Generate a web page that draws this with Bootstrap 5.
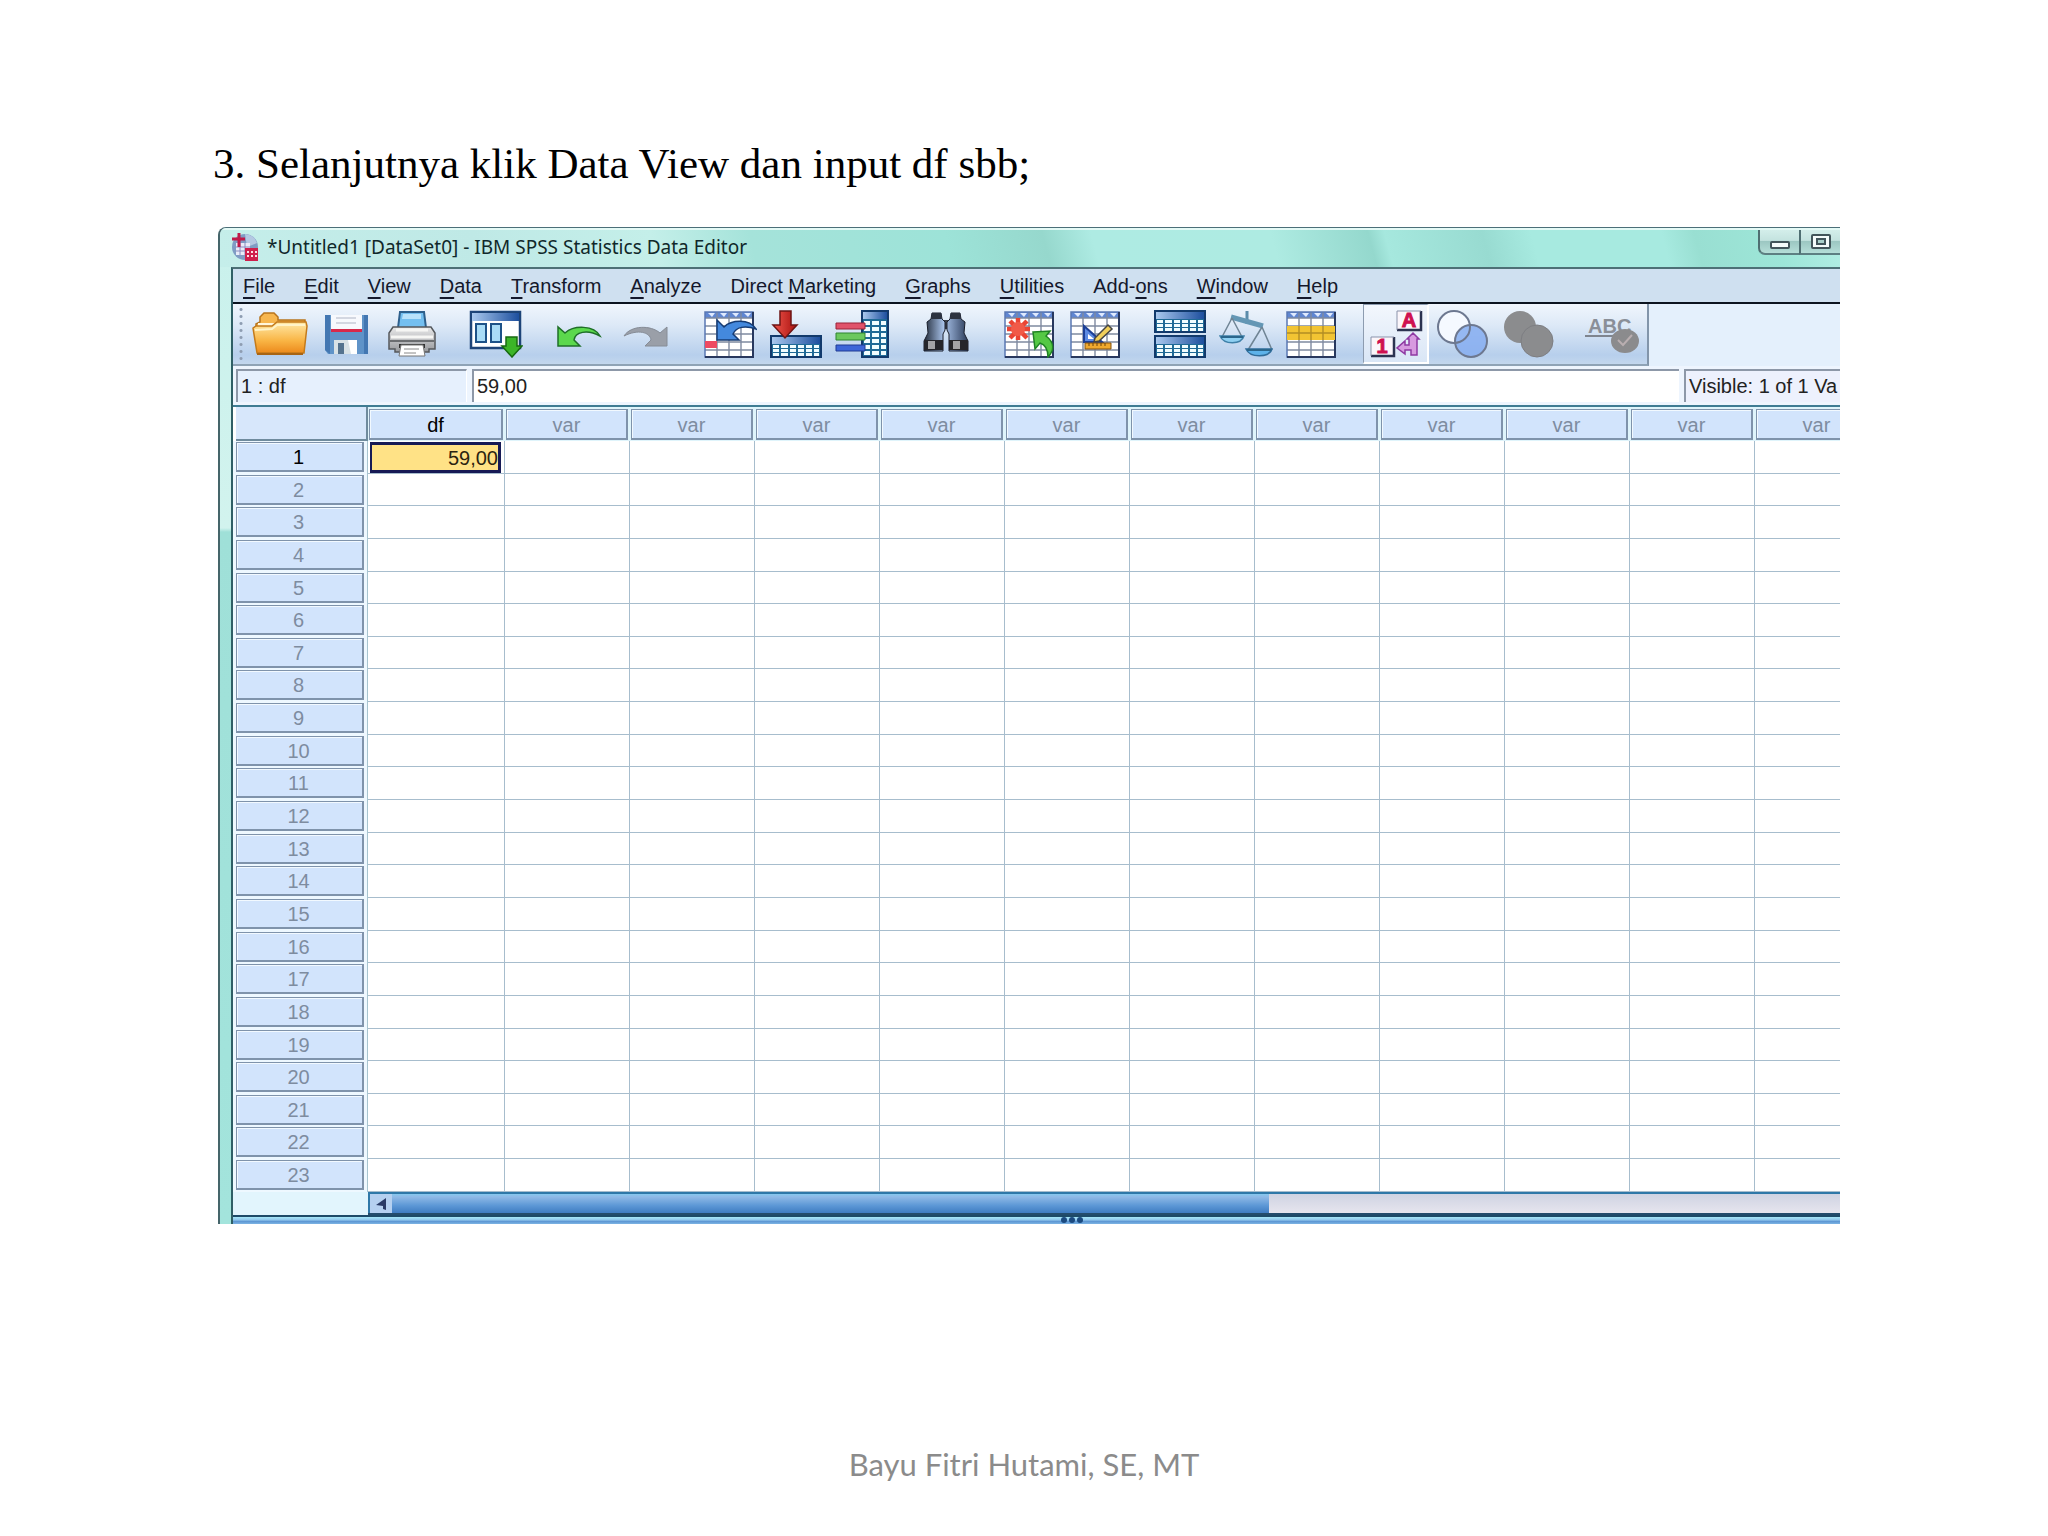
<!DOCTYPE html>
<html lang="id">
<head>
<meta charset="utf-8">
<meta name="viewport" content="width=device-width, initial-scale=1">
<title>Data View</title>
<link href="https://cdn.jsdelivr.net/npm/bootstrap@5.3.0/dist/css/bootstrap.min.css" rel="stylesheet">
<style>
body{background:#fff;color:#000;font-family:"Liberation Sans",Arial,sans-serif;font-size:20px;line-height:24px}
.slide{padding:140px 208px 48px 218px}
.step{font-family:"Liberation Serif","Times New Roman",serif;font-size:43px;line-height:48px;margin:0 0 39px -5px;font-weight:400}
.win{border-top:1px solid #4c6f78;border-left:2px solid #45656a;border-top-left-radius:8px;background:linear-gradient(#c9f1ec 0,#d2f3ee 300px,#9fe0d8 304px,#a3e4dc 100%);padding-left:11px;overflow:hidden}
.titlebar{height:39px;margin-left:-11px;padding-left:11px;border-top:2px solid #e4faf6;background:linear-gradient(75deg,#c5eeea 0,#bfe9e6 16%,#c4efe9 27%,#a5e3da 33%,#9de3d8 45%,#96d8cd 51%,#aeebe3 54%,#aeebe2 65%,#94d8cd 71%,#a6e8de 72%,#98dbd1 78%,#a7eae0 81%,#a7eae0 89%,#99dfd2 91%,#9de6d8 96%,#b2eee4 100%);font-family:"Noto Sans",sans-serif;font-size:18px}
.caption-line{height:34px}
.ttl{font-size:19px;line-height:24px;margin:0 0 0 8px;font-weight:400;color:#10282a}
.winbtn{height:25px;border:0;border-left:2px solid #4f6f72;border-bottom:2px solid #5d7f82;background:linear-gradient(#d3eeea 0,#c4e3df 45%,#9cc7c2 50%,#b5ded8 100%);padding:0;width:41px;line-height:0}
.winbtn:first-child{border-bottom-left-radius:7px}
.inner{border-top:2px solid #4d7076;border-left:2px solid #2f5f66;background:#e4f0fc}
.menus{height:35px;background:#cfe0f0;gap:29px;padding-left:10px;border-bottom:2px solid #0c1420}
.menus button{border:0;background:none;padding:0;color:#14182c;white-space:nowrap;line-height:24px}
.menus u{text-underline-offset:4px;text-decoration-thickness:2px}
.tools{width:1416px;height:62px;background:linear-gradient(#f0f6fd 0,#dde9f7 35%,#b7cfec 85%,#c3d7ee 100%);border-right:2px solid #8295aa;border-bottom:2px solid #8fa3b6}
.grip{width:14px;height:56px;padding-left:6px}
.grip::before{content:"";display:block;width:4px;height:56px;background:radial-gradient(circle,#8e9db2 1px,transparent 2px) 0 0/4px 7px}
.tool{width:66px;height:60px;flex:none;border:0;background:none;padding:0;line-height:0}
.tool.pressed{background:linear-gradient(#f3f7fd,#d9e6f6);border-top:1px solid #8d9cb0;border-left:1px solid #8d9cb0;border-right:2px solid #fff;border-bottom:2px solid #fff}
.gap-sep{margin-left:18px}
.entry{padding:3px 0 3px 3px;gap:5px;border-bottom:2px solid #3f7c93;background:#eef5fe}
.entry>*{height:33px;border:0;border-top:2px solid #8d98a8;border-left:2px solid #8d98a8;white-space:nowrap;border-radius:0;line-height:30px;padding:0 0 0 3px;color:#222}
.cellname{width:231px;flex:none;background:#e6f0fd;border-right:1px solid #fff!important}
.cellval{flex:1 1 0;min-width:0;background:#fff}
.visinfo{width:156px;flex:none;background:#edf1fd;overflow:hidden}
.sheet{overflow:hidden;background:#e2f5fd}
.gridtbl{table-layout:fixed;width:1647px;height:785px;border-collapse:separate;border-spacing:0;background:#fff;line-height:24px}
.gridtbl th,.gridtbl td{padding:0;font-weight:400;vertical-align:top}
.gridtbl td{border-right:1px solid #a7bdcd;border-bottom:1px solid #a7bdcd;text-align:right}
.gridtbl thead th{background:#dff4fb;height:34px}
.gridtbl tbody th{background:#eef8ff;border-right:1px solid #a7c4cf}
.box{display:block;text-align:center;border:1px solid #7f93ab;border-right-width:2px;border-bottom-width:2px;background:#d2e4fc;box-shadow:inset 1px 1px #f2f9ff;color:#7e8ca0}
thead .box{height:31px;margin:2px 2px 1px 1px;line-height:31px}
tbody .box{height:30px;margin:1px 3px 0;line-height:28px;padding-right:2px}
thead .corner{margin:0 0 0 3px;height:34px;border-width:0 2px 2px 0;border-color:#6f8b9d;box-shadow:none;background:#d7e7fb}
.box.on{color:#000}
.picked{display:block;margin:1px 3px -2px 2px;height:31px;border:3px solid #161a55;border-left-width:2px;background:#ffe286;line-height:26px;color:#2b2410}
.hscroll{height:23px;margin-left:135px;border-top:2px solid #2f78a8;border-bottom:2px solid #244c6c;background:linear-gradient(#cfd3e2,#e6e5ee)}
.arrowbtn{width:24px;border:0;border-left:2px solid #2f78a8;background:#b5d0f0;padding:0;line-height:0}
.thumb{width:877px;background:linear-gradient(#86c8ee 0,#8fb9e6 15%,#5d98d6 60%,#3f7cc2 100%)}
.split{height:9px;padding-left:70px;border-top:2px solid #1d4a68;background:linear-gradient(#a6e8f8 0,#8fc4ec 45%,#5b95d2 60%,#7db4e4 100%);line-height:0;text-align:center}
.author{font-family:Lato,"Open Sans",sans-serif;font-size:31px;line-height:36px;color:#8b8b8b;text-align:center;margin:222px 10px 0 0}
</style>
<script src="https://cdn.jsdelivr.net/npm/bootstrap@5.3.0/dist/js/bootstrap.bundle.min.js"></script>
</head>
<body>
<svg width="0" height="0" class="position-absolute" aria-hidden="true">
<defs>
<linearGradient id="gf" x2="0" y2="1"><stop offset="0" stop-color="#ffe9a8"/><stop offset=".6" stop-color="#f9b545"/><stop offset="1" stop-color="#ec8a1c"/></linearGradient>
<linearGradient id="gb"><stop offset="0" stop-color="#a9c8ee"/><stop offset="1" stop-color="#1d4f9e"/></linearGradient>
<linearGradient id="gc"><stop offset="0" stop-color="#222b3a"/><stop offset=".45" stop-color="#a9c3ea"/><stop offset="1" stop-color="#2a3a58"/></linearGradient>
<linearGradient id="gr"><stop offset="0" stop-color="#f0564c"/><stop offset="1" stop-color="#a8100e"/></linearGradient>
<linearGradient id="gp" x2="0" y2="1"><stop offset="0" stop-color="#e9e9ea"/><stop offset="1" stop-color="#96989c"/></linearGradient>
<g id="sheet">
<path d="M2 2h48v45H2z" fill="#fff"/><path d="M2 2h48v6H2z" fill="#5f86d2"/>
<path d="M5 3h7l-3 4zM17 3h7l-3 4zM29 3h7l-3 4zM41 3h7l-3 4z" fill="#dfeaff"/>
<path d="M2 8h48M2 16h48M2 24h48M2 32h48M2 40h48M14 2v45M26 2v45M38 2v45" stroke="#7f8aa0" stroke-width="1.4"/>
<path d="M2 2h48v45H2z" fill="none" stroke="#5a78b4" stroke-width="1.5"/><path d="M50 2v45H2" fill="none" stroke="#28385e" stroke-width="2"/>
</g>
<g id="half">
<path d="M1 1h50v21H1z" fill="#1f6a96"/><path d="M2 2h48v7H2z" fill="url(#gb)"/>
<path d="M3 10h6v3H3zm8 0h7v3h-7zm9 0h6v3h-6zm8 0h6v3h-6zm8 0h6v3h-6zm8 0h5v3h-5zM3 14h6v3H3zm8 0h7v3h-7zm9 0h6v3h-6zm8 0h6v3h-6zm8 0h6v3h-6zm8 0h5v3h-5zM3 18h6v3H3zm8 0h7v3h-7zm9 0h6v3h-6zm8 0h6v3h-6zm8 0h6v3h-6zm8 0h5v3h-5z" fill="#f1fdff"/>
<path d="M1 1h50v21H1z" fill="none" stroke="#123a6c" stroke-width="2"/>
</g>
</defs></svg>

<main class="slide">
<h1 class="step">3. Selanjutnya klik Data View dan input df sbb;</h1>

<section class="win" aria-label="Data Editor">
 <header class="titlebar d-flex align-items-start">
  <div class="caption-line d-flex align-items-center flex-grow-1">
   <svg width="28" height="28" viewBox="0 0 28 28" aria-hidden="true"><circle cx="14" cy="14" r="13" fill="#7f9cc4"/><path d="M14 1a13 13 0 0 1 12 9L16 14z" fill="#b4c8e2"/><path d="M5 10h14v12H5z" fill="#e8ecf8"/><path d="M5 14h14M5 18h14M9 10v12M14 10v12" stroke="#8c8cc0"/><path d="M8 0v14M1 6h13" stroke="#c01848" stroke-width="3"/><path d="M14 15h13v13H14z" fill="#cf1f4c"/><path d="M16 18h2v2h-2zm4 0h2v2h-2zm4 0h2v2h-2zm-8 4h2v2h-2zm4 0h2v2h-2zm4 0h2v2h-2z" fill="#fbdfe6"/></svg>
   <h2 class="ttl">*Untitled1 [DataSet0] - IBM SPSS Statistics Data Editor</h2>
  </div>
  <div class="d-flex">
   <button class="winbtn" aria-label="Minimize"><svg width="22" height="22" viewBox="0 0 22 22"><rect x="2" y="11" width="18" height="6" rx="1" fill="#f4fbfa" stroke="#42555a" stroke-width="2"/></svg></button>
   <button class="winbtn" aria-label="Maximize"><svg width="22" height="22" viewBox="0 0 22 22"><rect x="2" y="4" width="18" height="13" rx="1" fill="#f4fbfa" stroke="#42555a" stroke-width="2"/><rect x="7" y="8" width="8" height="5" fill="#a9cfca" stroke="#42555a" stroke-width="2"/></svg></button>
  </div>
 </header>

 <div class="inner">
  <nav class="menus d-flex align-items-center" aria-label="Menu">
   <button><u>F</u>ile</button><button><u>E</u>dit</button><button><u>V</u>iew</button><button><u>D</u>ata</button><button><u>T</u>ransform</button><button><u>A</u>nalyze</button><button>Direct <u>M</u>arketing</button><button><u>G</u>raphs</button><button><u>U</u>tilities</button><button>Add-<u>o</u>ns</button><button><u>W</u>indow</button><button><u>H</u>elp</button>
  </nav>

  <div class="tools d-flex align-items-center" role="toolbar" aria-label="Toolbar">
   <span class="grip"></span>
   <button class="tool" aria-label="Open"><svg width="56" height="48" viewBox="0 0 56 48"><path d="M4 14l4-2V7l4-4h10l4 4v3h27v12H4z" fill="#f7b64e" stroke="#b8741c" stroke-width="1.5"/><path d="M6 13h46v9H6z" fill="#fff6dc"/><path d="M1 18l3-2h16l5-4h29l1 4-3 27H5z" fill="url(#gf)" stroke="#c47a1a" stroke-width="1.5"/><path d="M5 44h46" stroke="#a86414" stroke-width="2"/><path d="M3 20l17-1 5-4h28" stroke="#fff3c8" fill="none" stroke-width="2"/></svg></button>
   <button class="tool" aria-label="Save"><svg width="52" height="48" viewBox="0 0 52 48"><path d="M5 5h43v39H8l-3-4z" fill="#5f93c8"/><path d="M5 5h5v39l-5-4zM44 5h4v39h-4z" fill="#4377b2"/><path d="M11 5h31v17H11z" fill="#f7f9fd"/><path d="M16 8h20M16 13h20" stroke="#c8cbd8" stroke-width="1.5"/><path d="M11 19h31v3H11z" fill="#d8294a"/><path d="M14 30h23v14H14z" fill="#d9e2e6"/><path d="M18 33h6v11h-6z" fill="#55738e"/><path d="M28 30h9v14h-6z" fill="#fff"/></svg></button>
   <button class="tool" aria-label="Print"><svg width="52" height="48" viewBox="0 0 52 48"><path d="M14 2h24l2 16H12z" fill="#74bff0" stroke="#2d5f8c" stroke-width="2"/><path d="M17 4h18v5H16z" fill="#b9e2fb"/><path d="M7 17h38l4 6v16h-6v3H9v-3H3V23z" fill="url(#gp)" stroke="#55585c" stroke-width="1.5"/><path d="M10 20h32M5 27h42" stroke="#f6f6f4" stroke-width="3"/><path d="M4 31h44" stroke="#6b6d70" stroke-width="2"/><path d="M13 34h26v4H13z" fill="#333"/><path d="M15 35h22l2 11H13z" fill="#fff" stroke="#777"/><path d="M18 39h15M18 43h12" stroke="#888"/></svg></button>
   <button class="tool gap-sep" aria-label="Recall dialogs"><svg width="54" height="48" viewBox="0 0 54 48"><path d="M2 2h49v36H2z" fill="#fff" stroke="#1d4478" stroke-width="2.5"/><path d="M3 3h47v8H3z" fill="url(#gb)"/><path d="M7 14h10v18H7zM22 14h10v18H22z" fill="#a9dcf7" stroke="#1d5288" stroke-width="2"/><path d="M37 27h11v9h5L43 47 33 36h4z" fill="#3cb528" stroke="#176a10" stroke-width="1.5"/></svg></button>
   <button class="tool gap-sep" aria-label="Undo"><svg width="52" height="48" viewBox="0 0 52 48"><path d="M4 17v19h22l-6-6c1-8 13-11 26-4C40 15 20 15 11 23z" fill="#5bd84c" stroke="#1f6f28" stroke-width="1.5"/></svg></button>
   <button class="tool" aria-label="Redo"><svg width="52" height="48" viewBox="0 0 52 48"><path d="M47 17v19H25l6-6C30 22 18 19 4 26 11 15 31 15 40 23z" fill="#9a9fa8" stroke="#868c96"/></svg></button>
   <button class="tool gap-sep" aria-label="Go to case"><svg width="54" height="48" viewBox="0 0 54 48"><use href="#sheet"/><path d="M2 31h12v7H2z" fill="#ee4a62"/><path d="M14 10v20h22l-6-6c3-7 12-9 23-5C46 8 28 10 21 17z" fill="#4489dd" stroke="#163c74" stroke-width="1.5"/></svg></button>
   <button class="tool" aria-label="Go to variable"><svg width="52" height="48" viewBox="0 0 52 48"><g transform="translate(0 25)"><use href="#half"/></g><path d="M10 1h11v14h6L15 28 3 15h7z" fill="url(#gr)" stroke="#6e1414" stroke-width="1.5"/></svg></button>
   <button class="tool" aria-label="Variables"><svg width="54" height="48" viewBox="0 0 54 48"><path d="M27 1h26v46H27z" fill="#1f6a96"/><path d="M28 2h24v7H28z" fill="url(#gb)"/><path d="M29 11h6v4h-6zm8 0h7v4h-7zm9 0h5v4h-5zM29 17h6v4h-6zm8 0h7v4h-7zm9 0h5v4h-5zM29 23h6v4h-6zm8 0h7v4h-7zm9 0h5v4h-5zM29 29h6v4h-6zm8 0h7v4h-7zm9 0h5v4h-5zM29 35h6v4h-6zm8 0h7v4h-7zm9 0h5v4h-5zM29 41h6v4h-6zm8 0h7v4h-7zm9 0h5v4h-5z" fill="#f1fdff"/><path d="M27 1h26v46H27z" fill="none" stroke="#123a6c" stroke-width="2"/><path d="M1 13h29v6H1z" fill="#e0526a" stroke="#9a2338"/><path d="M1 23h29v7H1z" fill="#6cc85e" stroke="#2f8430"/><path d="M1 35h29v6H1z" fill="#3d66d8" stroke="#203a94"/></svg></button>
   <button class="tool gap-sep" aria-label="Find"><svg width="52" height="48" viewBox="0 0 52 48"><path d="M20 10h12v9H20z" fill="#3a3f4a"/><path d="M12 3h9l1 6 3 3v8l-2 4v17H4V31l4-8-1-11 4-3zM31 3h9l1 6 4 3-1 11 4 8v10H29V24l-2-4v-8l3-3z" fill="url(#gc)" stroke="#1a1f2c"/><path d="M4 30h19v10H4zM29 30h19v10H29z" fill="#26262a"/><path d="M8 31h7v8H8zM33 31h7v8h-7z" fill="#a4a4a6"/><path d="M12 3h9l1 6H11zM31 3h9l1 6H30z" fill="#2d3340"/></svg></button>
   <button class="tool gap-sep" aria-label="Insert cases"><svg width="54" height="48" viewBox="0 0 54 48"><use href="#sheet"/><path d="M15 8v22M4 19h23M7 11l17 17M24 11L7 28" stroke="#ea4434" stroke-width="4.5"/><circle cx="15" cy="19" r="7" fill="#f15a48"/><path d="M30 22l17-1-4 5c8 6 9 14 2 21 0-7-2-12-8-14l-5 6z" fill="#55c845" stroke="#1f8324" stroke-width="1.5"/></svg></button>
   <button class="tool" aria-label="Insert variable"><svg width="54" height="48" viewBox="0 0 54 48"><use href="#sheet"/><path d="M15 16v16h18z" fill="#5c8ae2" stroke="#1c3f96" stroke-width="2"/><path d="M19 24v5h6z" fill="#fff"/><path d="M26 28l13-13 4 4-13 12-5 1z" fill="#f1cf5a" stroke="#444" stroke-width="1.5"/><path d="M16 33h26v6H16z" fill="#f0a92e" stroke="#85530e"/><path d="M20 33v3M24 33v3M28 33v3M32 33v3M36 33v3" stroke="#6b430a"/></svg></button>
   <button class="tool gap-sep" aria-label="Split file"><svg width="52" height="48" viewBox="0 0 52 48"><use href="#half"/><g transform="translate(0 25)"><use href="#half"/></g></svg></button>
   <button class="tool" aria-label="Weight cases"><svg width="54" height="48" viewBox="0 0 54 48" fill="none"><path d="M28 1v13" stroke="#5b8cab" stroke-width="3"/><path d="M12 7l32 9" stroke="#6497b5" stroke-width="5"/><path d="M13 8L3 27M13 8l10 19M43 17L29 40M43 17l10 23" stroke="#6f8494" stroke-width="1.5"/><path d="M1 26h24c-3 9-20 9-24 0z" fill="#8fd0f2" stroke="#3e80a8" stroke-width="1.5"/><path d="M27 39h26c-3 9-22 9-26 0z" fill="#5cb2ea" stroke="#2e6c9a" stroke-width="1.5"/><path d="M2 27h22M28 40h24" stroke="#2a668c" stroke-width="2"/></svg></button>
   <button class="tool" aria-label="Select cases"><svg width="54" height="48" viewBox="0 0 54 48"><use href="#sheet"/><path d="M2 16h48v14H2z" fill="#f2c433"/><path d="M2 23h48M14 16v14M26 16v14M38 16v14" stroke="#b28d25" stroke-width="1.4"/></svg></button>
   <button class="tool pressed gap-sep" aria-label="Value labels" aria-pressed="true"><svg width="54" height="48" viewBox="0 0 54 48"><path d="M28 1h24v19H28z" fill="#fbf6fb"/><path d="M52 1v19H28" fill="none" stroke="#2c3350" stroke-width="2.5"/><path d="M28 20V1h24" fill="none" stroke="#8b93ab"/><text x="40" y="17" text-anchor="middle" font-size="20" font-weight="700" fill="#cf1050" stroke="#cf1050">A</text><path d="M2 27h23v19H2z" fill="#fbf6fb"/><path d="M25 27v19H2" fill="none" stroke="#2c3350" stroke-width="2.5"/><path d="M2 46V27h23" fill="none" stroke="#8b93ab"/><text x="13" y="43" text-anchor="middle" font-size="20" font-weight="700" fill="#cf1050" stroke="#cf1050">1</text><path d="M44 23l6 6h-2v16h-6v-5h-6v4l-8-6 8-7v4h4v-6h-2z" fill="#d79ae0" stroke="#8e3aa2" stroke-width="1.5"/></svg></button>
   <button class="tool" aria-label="Use variable sets"><svg width="54" height="48" viewBox="0 0 54 48"><circle cx="19" cy="17" r="16" fill="#f5f9ff"/><circle cx="36" cy="31" r="16" fill="#87aef0" fill-opacity=".88"/><g fill="none" stroke="#6d7890" stroke-width="2"><circle cx="19" cy="17" r="16"/><circle cx="36" cy="31" r="16"/></g></svg></button>
   <button class="tool" aria-label="Show all variables"><svg width="54" height="48" viewBox="0 0 54 48" fill="#8b8c8e"><circle cx="19" cy="17" r="16"/><circle cx="36" cy="31" r="16" stroke="#7d7e82"/></svg></button>
   <button class="tool gap-sep" aria-label="Spell check"><svg width="56" height="48" viewBox="0 0 56 48"><text x="4" y="23" font-size="20" font-weight="700" fill="#8a8f98">ABC</text><path d="M1 26h28" stroke="#7f858f" stroke-width="2"/><ellipse cx="41" cy="31" rx="14" ry="12" fill="#8b8b8d"/><path d="M34 30l5 5 9-10" fill="none" stroke="#b9aeb0" stroke-width="2"/></svg></button>
  </div>

  <div class="entry d-flex">
   <div class="cellname">1 : df</div>
   <input class="cellval" type="text" value="59,00" aria-label="Cell value">
   <div class="visinfo">Visible: 1 of 1 Va</div>
  </div>

  <div class="sheet">
   <table class="gridtbl">
    <colgroup><col style="width:135px"><col style="width:137px"><col span="11"></colgroup>
    <thead><tr id="heads"><td class="border-0"><span class="box corner"></span></td><th scope="col"><span class="box on">df</span></th></tr></thead>
    <tbody id="cases"></tbody>
   </table>
   <div class="hscroll d-flex">
    <button class="arrowbtn" aria-label="Scroll left"><svg width="12" height="14" viewBox="0 0 12 14"><path d="M11 1v12L8 12V9L1 8z" fill="#2a3a66"/></svg></button>
    <div class="thumb"></div>
   </div>
  </div>
  <div class="split"><svg width="26" height="6" viewBox="0 0 26 6" fill="#1b4a80"><circle cx="5" cy="3" r="3"/><circle cx="13" cy="3" r="3"/><circle cx="21" cy="3" r="3"/></svg></div>
 </div>
</section>

<footer class="author">Bayu Fitri Hutami, SE, MT</footer>
</main>
<script>
const unnamed = 11, cases = 23;
document.getElementById('heads').insertAdjacentHTML('beforeend', '<th scope="col"><span class="box">var</span></th>'.repeat(unnamed));
let rows = '';
for (let n = 1; n <= cases; n++) {
  const first = n === 1;
  rows += '<tr><th scope="row"><span class="box' + (first ? ' on' : '') + '">' + n + '</span></th><td>' +
    (first ? '<span class="picked">59,00</span>' : '') + '</td>' + '<td></td>'.repeat(unnamed) + '</tr>';
}
document.getElementById('cases').innerHTML = rows;
</script>
</body>
</html>
